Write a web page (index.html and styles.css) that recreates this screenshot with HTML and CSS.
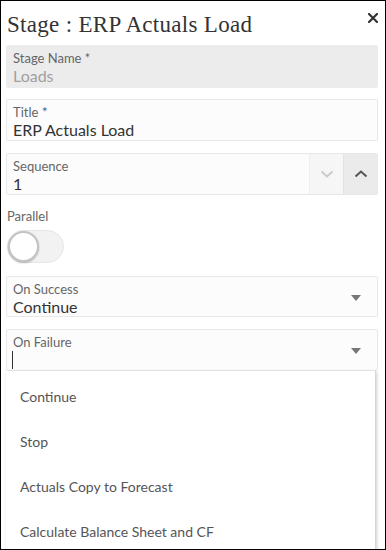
FILE: index.html
```html
<!DOCTYPE html>
<html>
<head>
<meta charset="utf-8">
<link rel="stylesheet" href="styles.css">
</head>
<body>
<div class="frame">
  <div class="header">
    <h1 class="title">Stage : ERP Actuals Load</h1>
    <svg class="close" width="10" height="10" viewBox="0 0 10 10"><path d="M1 1 L9 9 M9 1 L1 9" stroke="#333" stroke-width="2.2" stroke-linecap="square"/></svg>
  </div>
  <div class="field readonly f-stage">
    <div class="label">Stage Name *</div>
    <div class="value muted">Loads</div>
  </div>
  <div class="field f-title">
    <div class="label">Title <span class="req">*</span></div>
    <div class="value">ERP Actuals Load</div>
  </div>
  <div class="field seq f-seq">
    <div class="seq-main">
      <div class="label">Sequence</div>
      <div class="value">1</div>
    </div>
    <div class="spin down"><svg width="14" height="8" viewBox="0 0 14 8"><path d="M1.5 1.5 L7 6.5 L12.5 1.5" fill="none" stroke="#c9c9c9" stroke-width="1.8"/></svg></div>
    <div class="spin up"><svg width="14" height="8" viewBox="0 0 14 8"><path d="M1.5 6.5 L7 1.5 L12.5 6.5" fill="none" stroke="#555" stroke-width="2"/></svg></div>
  </div>
  <div class="parallel">
    <div class="plabel">Parallel</div>
    <div class="toggle"><div class="knob"></div></div>
  </div>
  <div class="field select f-success">
    <div class="sel-main">
      <div class="label">On Success</div>
      <div class="value">Continue</div>
    </div>
    <div class="caret"></div>
  </div>
  <div class="field select f-failure">
    <div class="sel-main">
      <div class="label">On Failure</div>
      <div class="value"><span class="cursor"></span></div>
    </div>
    <div class="caret"></div>
  </div>
  <ul class="menu">
    <li>Continue</li>
    <li>Stop</li>
    <li>Actuals Copy to Forecast</li>
    <li>Calculate Balance Sheet and CF</li>
  </ul>
</div>
</body>
</html>
```
FILE: styles.css
```css
html, body {
  margin: 0;
  padding: 0;
  background: #fff;
}
.frame {
  box-sizing: border-box;
  width: 386px;
  height: 550px;
  border: 1px solid #000;
  overflow: hidden;
  padding: 0 7px 0 5px;
  font-family: Lato, "Open Sans", sans-serif;
  color: #333;
}
.header {
  display: flex;
  justify-content: space-between;
  align-items: flex-start;
  height: 44px;
}
.title {
  margin: 10px 0 0 1px;
  font-family: "Liberation Serif", serif;
  font-weight: normal;
  font-size: 23px;
  line-height: 28px;
  letter-spacing: 0.3px;
  color: #333;
}
.close {
  margin-top: 12px;
  margin-right: 0;
}
.field {
  box-sizing: border-box;
  height: 42px;
  border: 1px solid #e8e8e8;
  border-radius: 2px;
  background: #fcfcfc;
  padding: 4px 0 0 6px;
}
.readonly {
  background: #ececec;
  border-color: #ececec;
  height: 43px;
}
.f-title { margin-top: 11px; }
.f-seq { margin-top: 12px; }
.f-success { margin-top: 13px; height: 41px; }
.f-failure { margin-top: 12px; }
.label {
  font-size: 13px;
  line-height: 16px;
  color: #666;
}
.req {
  color: #2d6fb0;
  font-size: 14px;
}
.value {
  font-size: 16px;
  line-height: 20px;
  color: #333;
}
.value.muted { color: #a0a0a0; }
.seq {
  display: flex;
  padding: 0;
}
.seq-main {
  flex: 1;
  padding: 4px 0 0 6px;
}
.spin {
  width: 33px;
  display: flex;
  align-items: center;
  justify-content: center;
}
.spin.down { background: #f6f6f6; border-left: 1px solid #eee; }
.spin.up { background: #ebebeb; border-left: 1px solid #e2e2e2; }
.parallel {
  padding-top: 13px;
  padding-left: 1px;
}
.plabel {
  font-size: 13px;
  line-height: 16px;
  color: #666;
}
.toggle {
  box-sizing: border-box;
  margin-top: 6px;
  width: 57px;
  height: 33px;
  border-radius: 17px;
  background: #f2f2f2;
  border: 1px solid #e6e6e6;
  position: relative;
}
.knob {
  position: absolute;
  left: 0;
  top: 0;
  box-sizing: border-box;
  width: 31px;
  height: 31px;
  border-radius: 50%;
  background: #fff;
  border: 2px solid #c4c4c4;
  box-shadow: 0 1px 2px rgba(0,0,0,0.25);
}
.select {
  display: flex;
  padding: 0;
}
.sel-main {
  flex: 1;
  padding: 4px 0 0 6px;
}
.caret {
  width: 0;
  height: 0;
  border-left: 5px solid transparent;
  border-right: 5px solid transparent;
  border-top: 6px solid #777;
  margin: 18px 16px 0 0;
}
.cursor {
  display: inline-block;
  width: 1px;
  height: 18px;
  background: #333;
  vertical-align: -3px;
  margin-left: -1px;
}
.menu {
  list-style: none;
  margin: 0;
  margin-right: 2px;
  padding: 3px 0 0 0;
  height: 200px;
  background: #fff;
  border-right: 1px solid #d5d5d5;
  box-shadow: 1px 1px 3px rgba(0,0,0,0.2);
}
.menu li {
  height: 45px;
  line-height: 45px;
  padding-left: 14px;
  font-size: 14px;
  color: #555;
}
```
